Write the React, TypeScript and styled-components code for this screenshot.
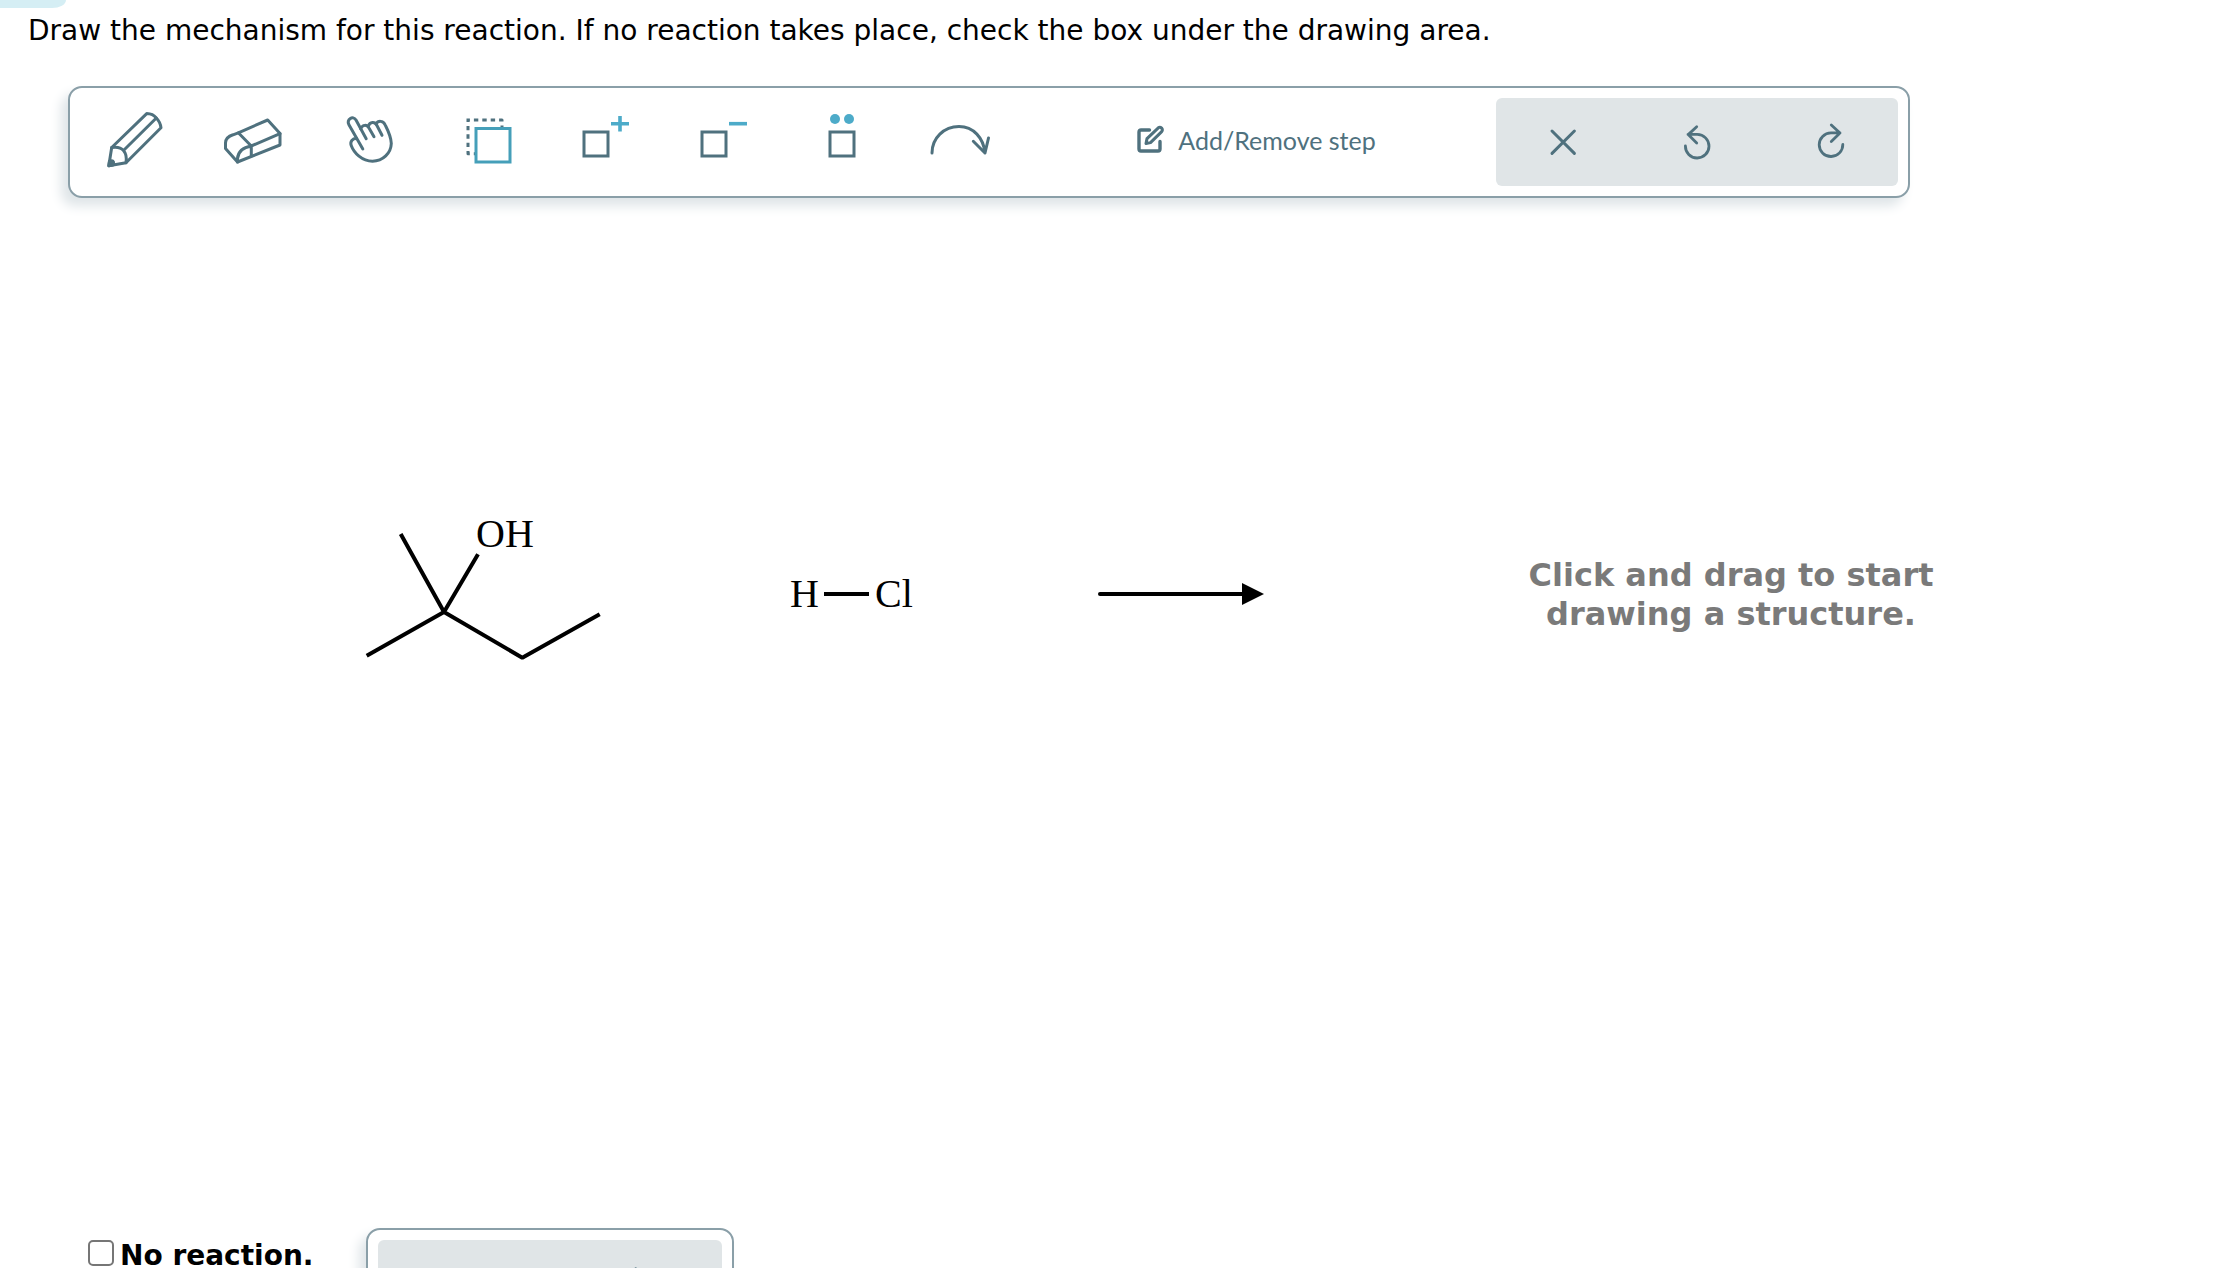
import React from "react";
import styled, { createGlobalStyle } from "styled-components";

const ink = "#4f717e";
const accent = "#459fb9";
const accentLight = "#4dabc9";
const outline = "#8a9fa8";
const panel = "#e0e5e7";

const GlobalStyle = createGlobalStyle`
  *, *::before, *::after { box-sizing: border-box; }
  body { margin: 0; background: #fff; }
`;

const Page = styled.main`
  height: 100vh;
  overflow: hidden;
  background: #fff;
  color: #000;
  font-family: Verdana, "DejaVu Sans", sans-serif;
`;

const TopTab = styled.div`
  width: 66px;
  height: 8px;
  border-bottom-right-radius: 14px 8px;
  background: #d5eef4;
`;

const Question = styled.p`
  margin: 0;
  padding: 5px 28px 0;
  height: 78px;
  font-size: 28px;
  line-height: 36px;
`;

const Frame = styled.div`
  display: flex;
  gap: 10px;
  padding: 10px;
  border: 2px solid ${outline};
  border-radius: 14px;
  background: #fff;
  box-shadow: -7px 8px 12px #dfe5e8;
`;

const Toolbar = styled(Frame)`
  margin: 0 68px;
  max-width: 1842px;
`;

const ToolButton = styled.button`
  display: flex;
  align-items: center;
  justify-content: center;
  width: 108px;
  height: 88px;
  padding: 0;
  border: 0;
  background: none;
  color: ${ink};
`;

const StepButton = styled(ToolButton)`
  flex: 1;
  width: auto;
  gap: 12px;
  padding-bottom: 5px;
  font-family: Lato, sans-serif;
  font-size: 25px;
  line-height: 32px;
`;

const ActionGroup = styled.div<{ $width: number }>`
  display: flex;
  width: ${(p) => p.$width}px;
  border-radius: 6px;
  background: ${panel};
`;

const ActionButton = styled(ToolButton)`
  flex: 1;
`;

const Canvas = styled.section`
  height: calc(100vh - 238px);
  padding: 306px 0 0 358px;
`;

const Reaction = styled.div`
  display: flex;
  align-items: center;
  gap: 172px;
`;

const Drawing = styled.svg`
  flex: none;
  display: block;
  font-family: "Liberation Serif", "Times New Roman", serif;
  font-size: 40px;
`;

const Hint = styled.p`
  margin: 0;
  padding-top: 2px;
  width: 582px;
  color: #7a7a7a;
  font-size: 32px;
  font-weight: 700;
  line-height: 39px;
  text-align: center;
`;

const Footer = styled.footer`
  display: flex;
  align-items: flex-start;
  padding-left: 88px;
`;

const NoReaction = styled.label`
  display: flex;
  align-items: flex-start;
  gap: 6px;
  width: 278px;
  padding-top: 12px;
  font-size: 28px;
  font-weight: 700;
  line-height: 32px;
  white-space: nowrap;
`;

const Checkbox = styled.input`
  appearance: none;
  flex: none;
  width: 26px;
  height: 26px;
  margin: 0;
  border: 2px solid #767676;
  border-radius: 5px;
  background: #fff;
  &:checked { background: ${accent}; }
`;

function Icon({ children, size = 64, weight = 3 }: { children: React.ReactNode; size?: number; weight?: number }) {
  return (
    <svg
      width={size}
      height={size}
      viewBox={`0 0 ${size} ${size}`}
      fill="none"
      stroke="currentColor"
      strokeWidth={weight}
      strokeLinecap="round"
      strokeLinejoin="round"
      aria-hidden="true"
    >
      {children}
    </svg>
  );
}

const Box = ({ x }: { x: number }) => <rect x={x} y="22" width="24" height="24" strokeLinejoin="miter" />;

const tools: { name: string; art: React.ReactNode }[] = [
  {
    name: "Draw",
    art: (
      <>
        <path d="M9.7 37.5 44.7 3.6Q51 3.8 54.3 8Q58.3 12 59 17.8L24 52.7 6.8 55.8Z" />
        <path d="M9.7 37.5Q18 36.3 21.5 40.5Q25.3 45 24 52.7M21.5 40.5 54.3 8" />
        <circle cx="9.4" cy="52.6" r="3.4" fill="currentColor" stroke="none" />
        <path d="M6.8 55.8 7.4 51.5 11.5 52.5 11 55Z" fill="currentColor" />
      </>
    ),
  },
  {
    name: "Erase",
    art: (
      <>
        <path d="M18.3 22.8 47.7 10 60 23.6V35L17.5 52 5.5 38.5V33Q5.7 27 13 24.8Z" />
        <path d="M18.3 22.8 31.3 36 60 23.6M31.3 36V46M17.5 52V48.5Q18.5 38 31.3 36" />
      </>
    ),
  },
  {
    name: "Select",
    art: (
      <>
        <path d="M24.8 39 10.8 14.5C8.6 9.5 14.8 5 18 10L28.2 28.7" />
        <path d="M22.6 18.6C24.5 14.5 29 14.3 31 18L36 26.7" />
        <path d="M30.2 16.4C32 11.5 36.8 11.5 38.8 15.2L44 25.3" />
        <path d="M38 14C40 10.4 45 10.4 47 14.6C50 20.5 53 26 53.3 33.5C53 43 45 51.2 34.5 51.2C24 51.2 16 43 13.2 35.5C11.8 31.5 14.5 28.5 18.5 28.6" />
      </>
    ),
  },
  {
    name: "Select area",
    art: (
      <>
        <path d="M10.5 10H46V18M12 8.5V43.7H20" strokeDasharray="4.4 4" strokeDashoffset="1" strokeLinecap="butt" />
        <rect x="20" y="18.5" width="34" height="33.5" fill="#fff" stroke={accent} strokeLinejoin="miter" />
      </>
    ),
  },
  {
    name: "Positive charge",
    art: (
      <>
        <Box x={10} />
        <path d="M37 13.7H55M46 6V21.5" stroke={accentLight} strokeWidth="3.6" strokeLinecap="butt" />
      </>
    ),
  },
  {
    name: "Negative charge",
    art: (
      <>
        <Box x={10} />
        <path d="M37 13.7H55" stroke={accentLight} strokeWidth="3.6" strokeLinecap="butt" />
      </>
    ),
  },
  {
    name: "Lone pair",
    art: (
      <>
        <Box x={20} />
        <g fill={accentLight} stroke="none">
          <circle cx="25" cy="9" r="5" />
          <circle cx="39" cy="9" r="5" />
        </g>
      </>
    ),
  },
  {
    name: "Curved arrow",
    art: <path d="M4 43C4 28 16 16.5 31 16.5C45.5 16.5 55.5 28 57 43M45.3 31.3 57 43 60.5 28" />,
  },
];

const ClearIcon = () => (
  <Icon>
    <path d="M21 21 43.4 43.4M43.4 21 21 43.4" />
  </Icon>
);

const UndoIcon = () => (
  <Icon>
    <path d="M20.4 36A11.8 11.8 0 1 0 32.2 24.4H23M31.7 16.8 23.2 24.6 31.7 33" strokeWidth="2.8" />
  </Icon>
);

const RedoIcon = () => (
  <Icon>
    <path d="M43.8 34.4A11.8 11.8 0 1 1 32 22.9H41M32.3 15 41 23.1 32.3 31.5" strokeWidth="2.8" />
  </Icon>
);

export default function App() {
  return (
    <Page>
      <GlobalStyle />
      <TopTab />
      <Question>
        Draw the mechanism for this reaction. If no reaction takes place, check the box under the drawing area.
      </Question>

      <Toolbar role="toolbar" aria-label="Drawing tools">
        {tools.map((tool) => (
          <ToolButton key={tool.name} type="button" aria-label={tool.name}>
            <Icon>{tool.art}</Icon>
          </ToolButton>
        ))}
        <StepButton type="button">
          <Icon size={32}>
            <path d="M15.5 6H7Q5 6 5 8V25Q5 27 7 27H24Q26 27 26 25V17.5" strokeWidth="3.4" />
            <path d="M12 19.5 13 14.6 24.3 3.8Q26 2.6 27.7 4.2 29 6 27.7 7.6L16.5 18.6Z" />
          </Icon>
          Add/Remove step
        </StepButton>
        <ActionGroup $width={402}>
          <ActionButton type="button" aria-label="Clear">
            <ClearIcon />
          </ActionButton>
          <ActionButton type="button" aria-label="Undo">
            <UndoIcon />
          </ActionButton>
          <ActionButton type="button" aria-label="Redo">
            <RedoIcon />
          </ActionButton>
        </ActionGroup>
      </Toolbar>

      <Canvas aria-label="Drawing area">
        <Reaction>
          <Drawing width="250" height="180" viewBox="0 -10 250 180" role="img" aria-label="2-methylbutan-2-ol">
            <path
              d="M42.7 20 86 98 120 40.3M8.7 141.7 86 98 164.3 143.7 241.7 100.3"
              fill="none"
              stroke="#000"
              strokeWidth="4"
              strokeLinejoin="bevel"
            />
            <text x="118" y="33">OH</text>
          </Drawing>
          <Drawing width="146" height="180" viewBox="0 -10 146 180" role="img" aria-label="Hydrogen chloride">
            <text x="10" y="93">H</text>
            <path d="M44 80H89" stroke="#000" strokeWidth="4" />
            <text x="95" y="93">Cl</text>
          </Drawing>
          <Drawing width="170" height="180" viewBox="0 -10 170 180" role="img" aria-label="Reaction arrow">
            <path d="M2 80H146" stroke="#000" strokeWidth="4" strokeLinecap="round" />
            <path d="M144 69 166 80 144 91Z" />
          </Drawing>
          <Hint>
            Click and drag to start
            <br />
            drawing a structure.
          </Hint>
        </Reaction>
      </Canvas>

      <Footer>
        <NoReaction htmlFor="no-reaction">
          <Checkbox id="no-reaction" type="checkbox" />
          No reaction.
        </NoReaction>
        <Frame>
          <ActionGroup $width={344}>
            <ActionButton type="button" aria-label="Clear answer">
              <ClearIcon />
            </ActionButton>
            <ActionButton type="button" aria-label="Restore answer">
              <UndoIcon />
            </ActionButton>
          </ActionGroup>
        </Frame>
      </Footer>
    </Page>
  );
}
